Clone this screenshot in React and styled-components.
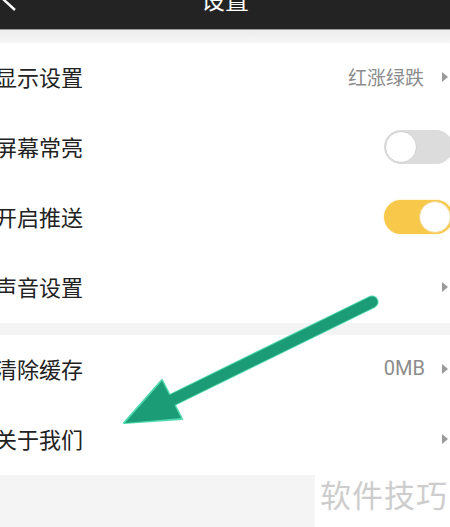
import React from 'react';
import styled, { createGlobalStyle } from 'styled-components';

const GlobalStyle = createGlobalStyle`
  html, body {
    margin: 0;
    padding: 0;
    background: #f4f4f4;
  }
  body {
    font-family: "Noto Sans CJK SC", "Noto Sans", sans-serif;
    overflow: hidden;
  }
`;

const Screen = styled.div`
  position: relative;
  width: 450px;
  height: 527px;
  overflow: hidden;
  background: #f4f4f4;
`;

const Header = styled.header`
  position: relative;
  display: flex;
  justify-content: center;
  height: 29px;
  background: #232323;
  border-bottom: 1px solid #9a9a9a;
  overflow: hidden;
`;

const Title = styled.h1`
  margin: -13px 0 0;
  font-size: 24px;
  line-height: 24px;
  font-weight: 400;
  color: #fff;
`;

const Back = styled.svg`
  position: absolute;
  left: 0;
  top: 0;
`;

const Band = styled.div`
  height: ${(p) => p.h}px;
  background: ${(p) => (p.top ? 'linear-gradient(#ececec, #f6f6f6)' : '#f4f4f4')};
`;

const Group = styled.div`
  background: #fff;
`;

const Row = styled.div`
  display: flex;
  align-items: center;
  height: 70px;
  margin: 0 -3px 0 -5px;
`;

const Label = styled.span`
  flex: 1;
  margin-top: -4px;
  font-size: 22px;
  color: #222;
`;

const Value = styled.span`
  margin-top: -4px;
  font-family: ${(p) => (p.latin ? 'Roboto, "Noto Sans CJK SC", sans-serif' : '"Noto Sans CJK SC", sans-serif')};
  font-size: ${(p) => (p.latin ? 20 : 19)}px;
  color: #8c8c8c;
  margin-right: ${(p) => (p.latin ? 17 : 18)}px;
`;

const Caret = styled.span`
  width: 0;
  height: 0;
  margin: -3px 5px 0 0;
  border-top: 5px solid transparent;
  border-bottom: 5px solid transparent;
  border-left: 6px solid #9a9a9a;
`;

const Switch = styled.span`
  position: relative;
  width: 69px;
  height: 34px;
  margin-top: -3px;
  border-radius: 17px;
  background: ${(p) => (p.on ? '#f8c84b' : '#dcdcdc')};
  box-shadow: ${(p) => (p.on ? '0 0 2px #fbe3a0' : 'none')};

  &::after {
    content: '';
    position: absolute;
    top: 1px;
    left: ${(p) => (p.on ? '35px' : '1px')};
    width: 30px;
    height: 30px;
    border-radius: 50%;
    background: #fff;
    border: 1px solid ${(p) => (p.on ? '#f3d585' : '#cfcfcf')};
  }
`;

const Watermark = styled.div`
  position: absolute;
  left: 315px;
  top: 473px;
  width: 135px;
  height: 54px;
  background: #fff;
  padding: 1px 0 0 5px;
  box-sizing: border-box;
  font-size: 31px;
  line-height: 40px;
  color: #cdcdcd;
  letter-spacing: 1px;
`;

const Pointer = styled.svg`
  position: absolute;
  left: 0;
  top: 0;
  pointer-events: none;
`;

const groups = [
  [
    { label: '显示设置', value: '红涨绿跌' },
    { label: '屏幕常亮', toggle: false },
    { label: '开启推送', toggle: true },
    { label: '声音设置' },
  ],
  [
    { label: '清除缓存', value: '0MB', latin: true },
    { label: '关于我们' },
  ],
];

const SettingRow = ({ item }) => (
  <Row>
    <Label>{item.label}</Label>
    {item.toggle !== undefined ? (
      <Switch on={item.toggle ? 1 : 0} />
    ) : (
      <>
        {item.value && <Value latin={item.latin ? 1 : 0}>{item.value}</Value>}
        <Caret />
      </>
    )}
  </Row>
);

const App = () => (
  <Screen>
    <GlobalStyle />
    <Header>
      <Back width="20" height="29" viewBox="0 0 20 29">
        <polyline points="15,-12 3,-1 15,10" fill="none" stroke="#fff" strokeWidth="2.4" />
      </Back>
      <Title>设置</Title>
    </Header>
    <Band h={13} top />
    <Group>
      {groups[0].map((item) => (
        <SettingRow key={item.label} item={item} />
      ))}
    </Group>
    <Band h={12} />
    <Group>
      {groups[1].map((item) => (
        <SettingRow key={item.label} item={item} />
      ))}
    </Group>
    <Watermark>软件技巧</Watermark>
    <Pointer width="450" height="527" viewBox="0 0 450 527">
      <line x1="372" y1="302" x2="168" y2="402" stroke="#4fd9ad" strokeWidth="13" strokeLinecap="round" />
      <polygon points="124,423 162,380 182,419" fill="#4fd9ad" stroke="#4fd9ad" strokeWidth="2" strokeLinejoin="round" />
      <line x1="372" y1="302" x2="168" y2="402" stroke="#1c9c76" strokeWidth="11" strokeLinecap="round" />
      <polygon points="125,423 162,381 181,418" fill="#1c9c76" />
    </Pointer>
  </Screen>
);

export default App;
